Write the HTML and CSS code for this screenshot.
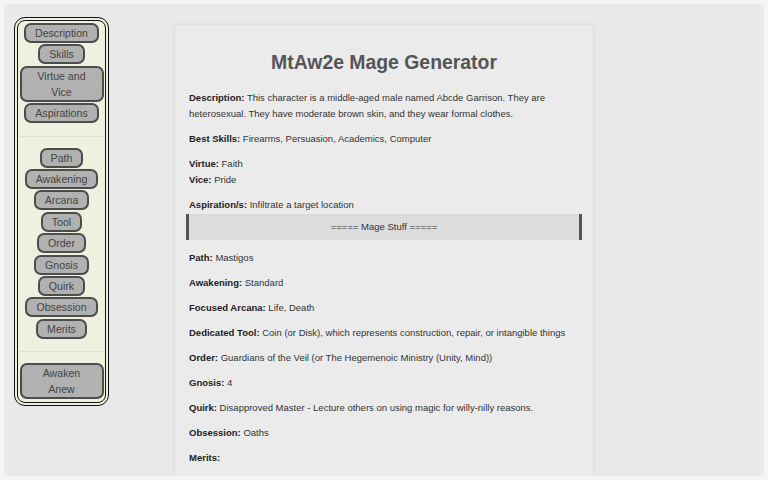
FILE: index.html
```html
<!DOCTYPE html>
<html lang="en">
<head>
    <meta charset="UTF-8">
    <meta name="viewport" content="width=device-width, initial-scale=1.0">
    <title>MtAw2e Mage Generator</title>
    <link rel="stylesheet" href="styles.css">
</head>
<body>

    <div class="layout">
        <nav class="sidebar">
            <button class="nav-btn">Description</button>
            <button class="nav-btn">Skills</button>
            <button class="nav-btn">Virtue and Vice</button>
            <button class="nav-btn">Aspirations</button>
            <hr>
            <button class="nav-btn">Path</button>
            <button class="nav-btn">Awakening</button>
            <button class="nav-btn">Arcana</button>
            <button class="nav-btn">Tool</button>
            <button class="nav-btn">Order</button>
            <button class="nav-btn">Gnosis</button>
            <button class="nav-btn">Quirk</button>
            <button class="nav-btn">Obsession</button>
            <button class="nav-btn">Merits</button>
            <hr>
            <button class="nav-btn">Awaken Anew</button>
        </nav>

        <div class="sheet">
            <h1>MtAw2e Mage Generator</h1>

            <p><strong>Description:</strong> This character is a middle-aged male named Abcde Garrison. They are heterosexual. They have moderate brown skin, and they wear formal clothes.</p>
            <p><strong>Best Skills:</strong> Firearms, Persuasion, Academics, Computer</p>
            <p><strong>Virtue:</strong> Faith<br><strong>Vice:</strong> Pride</p>
            <p class="tight"><strong>Aspiration/s:</strong> Infiltrate a target location</p>

            <div class="divider">===== Mage Stuff =====</div>

            <p><strong>Path:</strong> Mastigos</p>
            <p><strong>Awakening:</strong> Standard</p>
            <p><strong>Focused Arcana:</strong> Life, Death</p>
            <p><strong>Dedicated Tool:</strong> Coin (or Disk), which represents construction, repair, or intangible things</p>
            <p><strong>Order:</strong> Guardians of the Veil (or The Hegemenoic Ministry (Unity, Mind))</p>
            <p><strong>Gnosis:</strong> 4</p>
            <p><strong>Quirk:</strong> Disapproved Master - Lecture others on using magic for willy-nilly reasons.</p>
            <p><strong>Obsession:</strong> Oaths</p>
            <p><strong>Merits:</strong></p>
            <p>&nbsp;</p>
        </div>
    </div>

</body>
</html>
```

FILE: styles.css
```css
html {
    background-color: #f5f5f5;
}
body {
    font-family: "Liberation Sans", Arial, sans-serif;
    margin: 4px;
    height: calc(100vh - 8px);
    overflow: hidden;
    background-color: #e9e9e9;
    color: #333;
}
.layout {
    display: grid;
    grid-template-columns: 1fr 420px 1fr;
    align-items: start;
}
.sidebar {
    justify-self: start;
    margin: 13px 0 0 10px;
    width: 87px;
    padding: 2px 0 2px;
    border: 4px double #111;
    border-radius: 11px;
    background-color: #f0f0e0;
    display: flex;
    flex-direction: column;
    align-items: center;
}
.sidebar hr {
    width: 84px;
    border: 0;
    border-top: 1px solid #e0e0d0;
    margin: 11px 0;
}
.nav-btn {
    font-family: inherit;
    font-size: 10.6px;
    line-height: 16px;
    color: #444;
    max-width: 84px;
    padding: 0 9px;
    margin: 0 0 1.4px;
    background-color: #b1b1b1;
    border: 2px solid #4c4c4c;
    border-radius: 7px;
}
.sheet {
    margin-top: 20px;
    padding: 14px 14px 20px;
    min-height: 500px;
    background-color: #ebebeb;
    border: 1px solid #e2e2e2;
    box-shadow: 0 0 3px #e0e0e0;
    font-size: 9.5px;
    line-height: 16px;
}
h1 {
    text-align: center;
    font-size: 19.4px;
    color: #555;
    margin: 15px 0 20px;
}
.sheet p {
    margin: 0 0 9px;
}
.sheet p.tight {
    margin-bottom: 1px;
}
.sheet strong {
    color: #222;
}
.divider {
    background-color: #dcdcdc;
    border-left: 3px solid #555;
    border-right: 3px solid #555;
    margin: 0 -3px 10px;
    text-align: center;
    line-height: 26px;
}
```
